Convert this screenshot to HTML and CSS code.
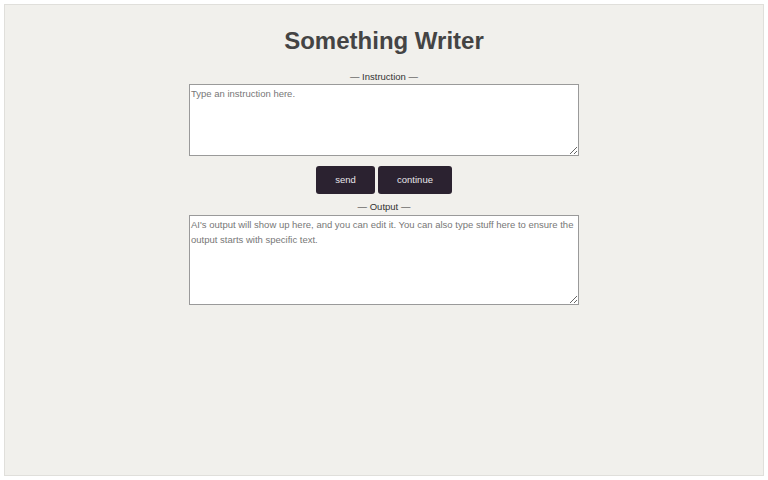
FILE: index.html
```html
<!DOCTYPE html>
<html lang="en">
<head>
<meta charset="utf-8">
<title>Something Writer</title>
<link rel="stylesheet" href="styles.css">
</head>
<body>
<main class="frame">
  <h1 class="title">Something Writer</h1>
  <label class="label" for="instruction">— Instruction —</label>
  <textarea id="instruction" class="box box-instruction" placeholder="Type an instruction here."></textarea>
  <div class="actions">
    <button class="btn btn-send" type="button">send</button>
    <button class="btn btn-continue" type="button">continue</button>
  </div>
  <label class="label label-output" for="output">— Output —</label>
  <textarea id="output" class="box box-output" placeholder="AI's output will show up here, and you can edit it. You can also type stuff here to ensure the output starts with specific text."></textarea>
</main>
</body>
</html>
```

FILE: styles.css
```css
html, body {
  margin: 0;
  padding: 0;
  background: #ffffff;
}

body {
  padding: 4px;
  font-family: "Liberation Sans", Arial, sans-serif;
}

.frame {
  box-sizing: border-box;
  height: 472px;
  border: 1px solid #e0dfdb;
  background: #f1f0ec;
  display: flex;
  flex-direction: column;
  align-items: center;
}

.title {
  margin: 22px 0 0;
  font-size: 24px;
  line-height: 28px;
  font-weight: bold;
  color: #444444;
}

.label {
  margin-top: 16px;
  font-size: 9.5px;
  line-height: 12px;
  color: #333333;
}

.label-output {
  margin-top: 7px;
}

.box {
  box-sizing: border-box;
  width: 390px;
  margin: 1px 0 0;
  padding: 1px;
  border: 1px solid #9a9a9a;
  background: #ffffff;
  font-family: "Liberation Sans", Arial, sans-serif;
  font-size: 9.5px;
  line-height: 15px;
  color: #333333;
}

.box::placeholder {
  color: #777777;
  opacity: 1;
}

.box-instruction {
  height: 72px;
}

.box-output {
  height: 90px;
  margin-top: 2px;
}

.actions {
  display: flex;
  gap: 3px;
  margin-top: 10px;
}

.btn {
  height: 28px;
  padding: 0 19px 2px;
  border: none;
  border-radius: 3px;
  background: #2b2230;
  color: #e8e6ea;
  font-family: "Liberation Sans", Arial, sans-serif;
  font-size: 9.5px;
}

.btn-send {
  width: 59px;
}

.btn-continue {
  width: 74px;
}
```
